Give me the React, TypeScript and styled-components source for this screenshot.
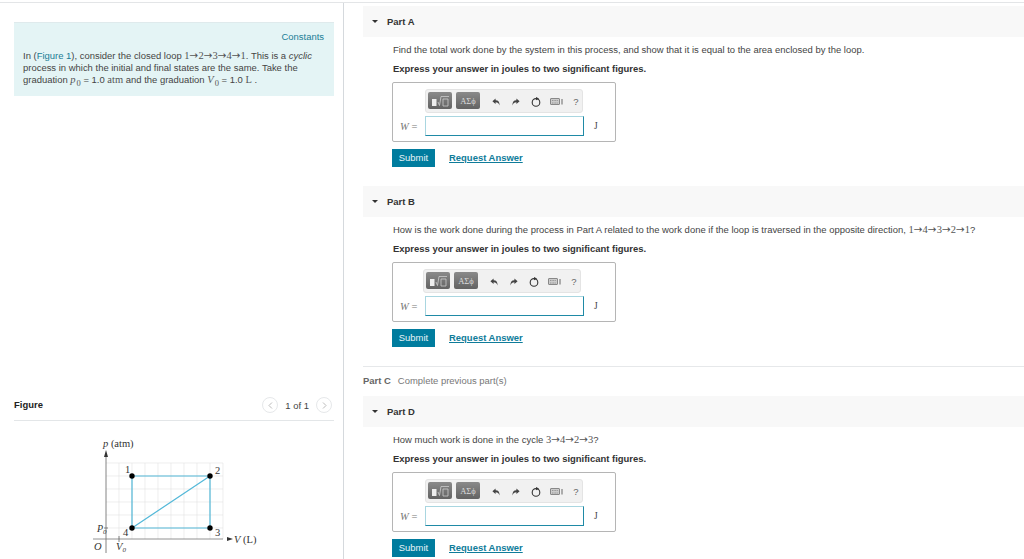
import React from 'react';
import styled, { createGlobalStyle } from 'styled-components';

const Global = createGlobalStyle`
  html, body {
    margin: 0;
    padding: 0;
    height: 559px;
    overflow: hidden;
    background: #fff;
    font-family: "Liberation Sans", Arial, sans-serif;
    color: #333;
  }
  * { box-sizing: border-box; }
`;

const Page = styled.div`
  height: 559px;
  overflow: hidden;
  padding-top: 2px;
`;

const Columns = styled.div`
  display: grid;
  grid-template-columns: 344px 1fr;
  height: 557px;
  border-top: 1px solid #e3e5e7;
`;

const LeftPane = styled.div`
  display: flex;
  flex-direction: column;
  padding: 19px 9px 0 14px;
  border-right: 1px solid #d5d9dd;
`;

const InfoBox = styled.div`
  height: 74px;
  padding: 8px 10px 0 9px;
  background: #e4f4f5;
  border-top: 1px solid #dfeaec;
  font-size: 9.46px;
  line-height: 12px;
  color: #444;
`;

const ConstantsLink = styled.div`
  text-align: right;
  color: #1a7d96;
  margin-bottom: 7px;
`;

const Blue = styled.span`
  color: #1a7d96;
`;

const MathText = styled.span`
  font-family: "Liberation Serif", "Times New Roman", serif;
  font-size: 10.5px;
  line-height: 0;
  color: #555;
`;

const Arrow = styled.span`
  font-family: "DejaVu Sans", sans-serif;
  font-size: 10.5px;
  line-height: 0;
`;

const Sub = styled.sub`
  margin-left: 1px;
  font-size: 8.5px;
  line-height: 0;
`;

const Var = styled.i`
  font-family: "Liberation Serif", "Times New Roman", serif;
`;

const FigureHeader = styled.div`
  display: flex;
  align-items: center;
  justify-content: space-between;
  margin-top: 300px;
  height: 25px;
  padding-bottom: 8px;
  border-bottom: 1px solid #e3e6e8;
`;

const FigureTitle = styled.div`
  font-size: 9.46px;
  font-weight: bold;
  color: #222;
`;

const Pager = styled.div`
  display: flex;
  align-items: center;
  gap: 7px;
  margin-top: 2px;
  font-size: 9.46px;
  color: #444;
  padding-right: 2px;
`;

const PagerButton = styled.span`
  width: 16px;
  height: 16px;
  border-radius: 50%;
  border: 1px solid #e6e8ea;
  display: flex;
  align-items: center;
  justify-content: center;
`;

const FigureArea = styled.div`
  padding: 9px 0 0 70px;
`;

const RightPane = styled.div`
  padding: 3px 0 0 19px;
  min-width: 0;
`;

const PartHeader = styled.div`
  display: flex;
  align-items: center;
  gap: 9px;
  height: 31px;
  padding-left: 9px;
  background: #f8f8f8;
  font-size: 9.46px;
  font-weight: bold;
  color: #333;
`;

const Caret = styled.span`
  width: 0;
  height: 0;
  border-left: 3px solid transparent;
  border-right: 3px solid transparent;
  border-top: 3px solid #333;
`;

const PartBody = styled.div<{ $bottom: number }>`
  padding: 6px 0 0 30px;
  margin-bottom: ${(p) => p.$bottom}px;
`;

const Prompt = styled.div`
  padding-top: 1px;
  font-size: 9.46px;
  line-height: 12px;
  color: #444;
  margin-bottom: 7px;
`;

const Instruction = styled.div`
  font-size: 9.46px;
  line-height: 12px;
  font-weight: bold;
  color: #333;
  margin-bottom: 7px;
`;

const AnswerBox = styled.div`
  width: 224px;
  height: 60px;
  margin-left: -1px;
  border: 1px solid #b5b5b5;
  border-radius: 2px;
  padding: 6px 0 0 32px;
`;

const Toolbar = styled.div<{ $shift: number }>`
  display: flex;
  align-items: flex-start;
  width: 158px;
  height: 24px;
  margin-left: ${(p) => p.$shift}px;
  padding: 2px 0 0 2px;
  background: #f1f1f1;
  border: 1px solid #e4e4e4;
  border-radius: 3px;
`;

const TemplateButton = styled.span<{ $width: number }>`
  flex: none;
  width: ${(p) => p.$width}px;
  height: 17px;
  margin-right: 4px;
  border-radius: 2px;
  background: linear-gradient(#8a8a8a, #636363);
  color: #ddd;
  display: flex;
  align-items: center;
  justify-content: center;
  font-family: "Liberation Serif", serif;
  font-size: 8.5px;
`;

const ToolIcons = styled.div`
  display: flex;
  flex: none;
  gap: 10px;
  margin-left: 7px;
  color: #444;
`;

const ToolSlot = styled.span`
  width: 10px;
  height: 19px;
  display: flex;
  align-items: center;
  justify-content: center;
`;

const HelpMark = styled.span`
  font-size: 9.5px;
  color: #666;
`;

const InputRow = styled.div`
  display: flex;
  align-items: center;
  margin-top: 3px;
  margin-left: -25px;
`;

const InputLabel = styled.span`
  width: 25px;
  font-family: "Liberation Serif", serif;
  font-size: 10.5px;
  color: #777;
`;

const AnswerInput = styled.div`
  width: 159px;
  height: 20px;
  background: #fff;
  border: 1px solid #1f8aa6;
  border-top-color: #a9d6e0;
  border-left-color: #a9d6e0;
`;

const Unit = styled.span`
  margin-left: 10px;
  font-family: "Liberation Serif", serif;
  font-size: 9.5px;
  color: #444;
`;

const Actions = styled.div`
  display: flex;
  align-items: center;
  gap: 14px;
  margin: 7px 0 0 -1px;
`;

const SubmitButton = styled.button`
  width: 43px;
  height: 18px;
  padding: 0 0 1px;
  border: 0;
  background: #007c9e;
  color: #e8f4f7;
  font-family: inherit;
  font-size: 9.46px;
`;

const RequestLink = styled.a`
  margin-bottom: 2px;
  color: #0f7c9a;
  font-size: 9.46px;
  font-weight: bold;
  text-decoration: underline;
`;

const LockedPart = styled.div`
  display: flex;
  gap: 7px;
  height: 30px;
  padding-top: 8px;
  border-top: 1px solid #e6e8ea;
  font-size: 9.46px;
  color: #777;
`;

const LockedName = styled.b`
  color: #666;
`;

const Undo = ({ flip }: { flip?: boolean }) => (
  <svg width="8" height="8" viewBox="0 0 10 10" style={flip ? { transform: 'scaleX(-1)' } : undefined}>
    <path d="M0.5 4 L4.5 0.5 V2.8 C8 2.8 9.5 5 9.5 9.5 C8.5 6.5 7 5.4 4.5 5.4 V7.5 Z" fill="#444" />
  </svg>
);

const Reset = () => (
  <svg width="10" height="10" viewBox="0 0 10 10">
    <circle cx="5" cy="5.4" r="3.8" fill="none" stroke="#333" strokeWidth="1.1" />
    <path d="M5 0 L8 1.6 L5 3.2 Z" fill="#333" />
  </svg>
);

const Keyboard = () => (
  <svg width="13" height="7" viewBox="0 0 13 7" style={{ flex: 'none' }}>
    <rect x="0.5" y="0.5" width="9" height="6" rx="0.5" fill="#ccc" stroke="#888" />
    <path d="M2 5 H8 M2 2.5 H8" stroke="#888" strokeWidth="0.8" strokeDasharray="1 0.6" />
    <path d="M12 1 V6.5" stroke="#666" />
  </svg>
);

const Chevron = ({ dir }: { dir: 'left' | 'right' }) => (
  <svg width="5" height="7" viewBox="0 0 5 7">
    <path d={dir === 'left' ? 'M4 0.5 L1 3.5 L4 6.5' : 'M1 0.5 L4 3.5 L1 6.5'} fill="none" stroke="#bbb" />
  </svg>
);

// digits of a cycle joined by long arrows, e.g. 1→2→3
const Cycle = ({ steps }: { steps: number[] }) => (
  <MathText>
    {steps.map((s, i) => (
      <React.Fragment key={i}>
        {i > 0 && <Arrow>→</Arrow>}
        {s}
      </React.Fragment>
    ))}
  </MathText>
);

const AnswerArea = ({ shift }: { shift: number }) => (
  <>
    <AnswerBox>
      <Toolbar $shift={shift}>
        <TemplateButton $width={24}>
          <svg width="19" height="12" viewBox="0 0 19 12">
            <rect x="1" y="4" width="4.5" height="7" fill="#eee" />
            <path d="M7 7 L8.5 10.5 L10 1.5 H18 M12 4 H17 V11 H12 Z" fill="none" stroke="#ccc" strokeWidth="0.8" />
          </svg>
        </TemplateButton>
        <TemplateButton $width={24}>AΣϕ</TemplateButton>
        <ToolIcons>
          <ToolSlot><Undo /></ToolSlot>
          <ToolSlot><Undo flip /></ToolSlot>
          <ToolSlot><Reset /></ToolSlot>
          <ToolSlot><Keyboard /></ToolSlot>
          <ToolSlot><HelpMark>?</HelpMark></ToolSlot>
        </ToolIcons>
      </Toolbar>
      <InputRow>
        <InputLabel>
          <Var>W</Var> =
        </InputLabel>
        <AnswerInput />
        <Unit>J</Unit>
      </InputRow>
    </AnswerBox>
    <Actions>
      <SubmitButton>Submit</SubmitButton>
      <RequestLink>Request Answer</RequestLink>
    </Actions>
  </>
);

const CycleChart = () => (
  <svg width="190" height="129" viewBox="0 0 190 129">
    <g stroke="#e2e2e2" strokeWidth="0.6">
      {[35, 48, 61, 74, 87, 100, 113, 126, 139].map((x) => (
        <path key={x} d={`M${x} 33 V109`} />
      ))}
      {[33, 46, 59, 72, 85, 98].map((y) => (
        <path key={y} d={`M22 ${y} H139`} />
      ))}
    </g>
    <path d="M22 123 V25" stroke="#666" strokeWidth="0.8" />
    <path d="M22 20 L24 27 H20 Z" fill="#333" />
    <path d="M9 109 H139" stroke="#777" strokeWidth="0.8" />
    <path d="M149 109 L143 107 V111 Z" fill="#333" />
    <path d="M35 106 V112" stroke="#666" strokeWidth="0.8" />
    <path d="M20 98 H24" stroke="#666" strokeWidth="0.8" />
    <path d="M48 46 H126 V98 H48 Z M48 98 L126 46" fill="none" stroke="#52b8d8" strokeWidth="1.2" />
    <circle cx="48" cy="46" r="2.7" fill="#000" />
    <circle cx="126" cy="46" r="2.7" fill="#000" />
    <circle cx="126" cy="98" r="2.7" fill="#000" />
    <circle cx="48" cy="98" r="2.7" fill="#000" />
    <g fontFamily="Liberation Serif, serif" fontSize="10.5" fill="#333">
      <text x="19" y="17"><tspan fontStyle="italic">p</tspan> (atm)</text>
      <text x="41" y="43">1</text>
      <text x="131" y="44">2</text>
      <text x="131" y="106">3</text>
      <text x="39" y="106">4</text>
      <text x="13" y="102" fontStyle="italic" fontSize="10">P<tspan fontSize="7" dy="2">0</tspan></text>
      <text x="10" y="120" fontStyle="italic">O</text>
      <text x="32" y="120" fontStyle="italic">V<tspan fontSize="7" dy="2">0</tspan></text>
      <text x="150" y="113"><tspan fontStyle="italic">V</tspan> (L)</text>
    </g>
  </svg>
);

const App = () => {
  return (
    <Page>
      <Global />
      <Columns>
        <LeftPane>
          <InfoBox>
            <ConstantsLink>Constants</ConstantsLink>
            In (<Blue>Figure 1</Blue>), consider the closed loop <Cycle steps={[1, 2, 3, 4, 1]} />. This is a <i>cyclic</i>
            <br />
            process in which the initial and final states are the same. Take the
            <br />
            graduation <MathText><i>p</i><Sub>0</Sub></MathText> = 1.0 <MathText>atm</MathText> and the graduation{' '}
            <MathText><i>V</i><Sub>0</Sub></MathText> = 1.0 <MathText>L</MathText> .
          </InfoBox>
          <FigureHeader>
            <FigureTitle>Figure</FigureTitle>
            <Pager>
              <PagerButton><Chevron dir="left" /></PagerButton>
              1 of 1
              <PagerButton><Chevron dir="right" /></PagerButton>
            </Pager>
          </FigureHeader>
          <FigureArea>
            <CycleChart />
          </FigureArea>
        </LeftPane>
        <RightPane>
          <PartHeader><Caret />Part A</PartHeader>
          <PartBody $bottom={19}>
            <Prompt>Find the total work done by the system in this process, and show that it is equal to the area enclosed by the loop.</Prompt>
            <Instruction>Express your answer in joules to two significant figures.</Instruction>
            <AnswerArea shift={0} />
          </PartBody>
          <PartHeader><Caret />Part B</PartHeader>
          <PartBody $bottom={19}>
            <Prompt>
              How is the work done during the process in Part A related to the work done if the loop is traversed in the opposite direction, <Cycle steps={[1, 4, 3, 2, 1]} />?
            </Prompt>
            <Instruction>Express your answer in joules to two significant figures.</Instruction>
            <AnswerArea shift={-2} />
          </PartBody>
          <LockedPart>
            <LockedName>Part C</LockedName> Complete previous part(s)
          </LockedPart>
          <PartHeader><Caret />Part D</PartHeader>
          <PartBody $bottom={0}>
            <Prompt>How much work is done in the cycle <Cycle steps={[3, 4, 2, 3]} />?</Prompt>
            <Instruction>Express your answer in joules to two significant figures.</Instruction>
            <AnswerArea shift={0} />
          </PartBody>
        </RightPane>
      </Columns>
    </Page>
  );
};

export default App;
